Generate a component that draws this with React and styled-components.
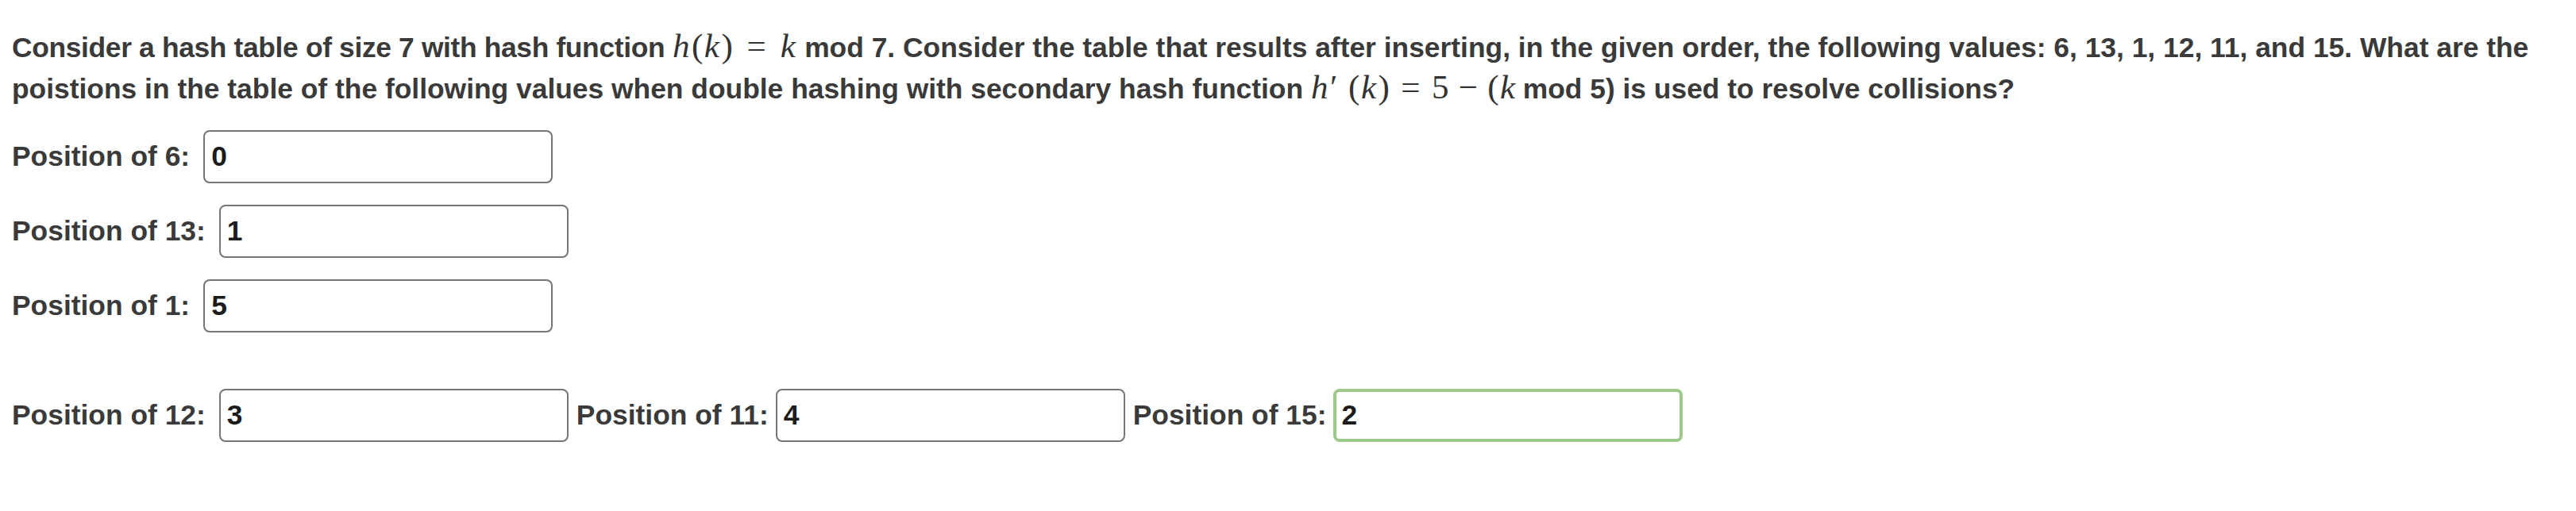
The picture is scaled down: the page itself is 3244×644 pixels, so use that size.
import React from "react";
import styled, { createGlobalStyle } from "styled-components";

const Global = createGlobalStyle`
  html, body { margin: 0; padding: 0; background: #ffffff; }
  body { font-family: "Liberation Sans", Arial, Helvetica, sans-serif; }
`;

const Page = styled.div`
  padding: 33px 8px 0 15px;
  color: #3a3a3a;
  font-size: 35.4px;
  font-weight: 700;
`;

const Question = styled.p`
  margin: 0 0 27px 0;
  line-height: 50px;
`;

const Lead = styled.span`
  letter-spacing: -0.35px;
`;

const Math = styled.span`
  font-family: "Liberation Serif", "Times New Roman", serif;
  font-weight: 400;
  font-size: 43px;
  letter-spacing: 1.5px;
  color: #333;
`;

const Var = styled.i`
  font-style: italic;
  padding-right: 1px;
`;

const Op = styled.span`
  margin: 0 ${(p) => p.$space || "0.3em"};
`;

const Mod = styled.span`
  font-family: "Liberation Sans", Arial, sans-serif;
  font-weight: 700;
  font-size: 35.4px;
  letter-spacing: 0;
  color: #3a3a3a;
  margin-left: ${(p) => p.$gap || "0.2em"};
`;

const Row = styled.div`
  display: flex;
  align-items: center;
  height: 66px;
  margin-bottom: ${(p) => p.$after || "28px"};
`;

const Label = styled.label`
  white-space: pre;
  margin-right: ${(p) => p.$gap || "17px"};
  margin-left: ${(p) => p.$lead || "0"};
`;

const Field = styled.input`
  box-sizing: border-box;
  width: 440px;
  height: 67px;
  border: ${(p) => (p.$correct ? "4px solid #9cc987" : "2px solid #767676")};
  border-radius: 8px;
  font-family: "Liberation Sans", Arial, sans-serif;
  font-size: 35.4px;
  font-weight: 700;
  color: #1c1c1c;
  background: #fff;
  outline: none;
  padding: 0 0 0 ${(p) => (p.$correct ? "6px" : "8px")};
`;

export default function App() {
  return (
    <>
      <Global />
      <Page>
        <Question>
          <Lead>Consider a hash table of size 7 with hash function</Lead>{" "}
          <Math>
            <Var>h</Var>(<Var>k</Var>)<Op $space="0.38em">=</Op><Var>k</Var>
          </Math>
          <Mod $gap="0.25em">mod</Mod> 7. Consider the table that results after inserting, in the
          given order, the following values: 6, 13, 1, 12, 11, and 15. What are the poistions in
          the table of the following values when double hashing with secondary hash function{" "}
          <Math>
            <Var>h</Var>′ (<Var>k</Var>)<Op>=</Op>5<Op $space="0.25em">−</Op>(<Var>k</Var>
          </Math>
          <Mod>mod</Mod> 5) is used to resolve collisions?
        </Question>
        <Row>
          <Label>Position of 6:</Label>
          <Field defaultValue="0" />
        </Row>
        <Row>
          <Label>Position of 13:</Label>
          <Field defaultValue="1" />
        </Row>
        <Row $after="72px">
          <Label>Position of 1:</Label>
          <Field defaultValue="5" />
        </Row>
        <Row>
          <Label>Position of 12:</Label>
          <Field defaultValue="3" />
          <Label $lead="10px" $gap="9px">Position of 11:</Label>
          <Field defaultValue="4" />
          <Label $lead="10px" $gap="9px">Position of 15:</Label>
          <Field defaultValue="2" $correct />
        </Row>
      </Page>
    </>
  );
}
